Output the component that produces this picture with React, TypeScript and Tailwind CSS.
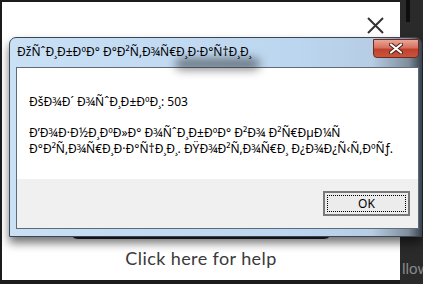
export default function App() {
  return (
    <div className="relative flex h-[284px] w-[423px] overflow-hidden bg-[#1c1c1c] pt-[2px] pl-[2px]">
      {/* page behind the dialog */}
      <div className="flex h-[278px] w-[398px] flex-col bg-white">
        <div className="flex justify-end pr-[15px] pt-[14px]">
          <svg width="19" height="19" viewBox="0 0 19 19">
            <path d="M2 2 L17 17 M17 2 L2 17" stroke="#333" strokeWidth="2" />
          </svg>
        </div>
        <div className="mx-[68px] mt-[115px] h-[89px] rounded-b-[8px] bg-[#262626]" />
        <div className="mt-[6px] text-center text-[18px] tracking-[0.4px] text-[#3a3a3a] [font-family:Lato,'Open_Sans',sans-serif]">
          Click here for help
        </div>
      </div>
      <div className="-mt-[2px] flex h-[284px] flex-1 flex-col overflow-hidden bg-[#2a2a2a]">
        <div className="ml-[6px] h-[22px] w-[4px] bg-[#0e0e0e]" />
        <div className="mt-[237px] whitespace-nowrap pl-[2px] text-[15px] leading-[18px] text-[#8a8a8a] [font-family:Lato,sans-serif]">
          llow
        </div>
      </div>

      {/* dialog window over the page */}
      <div className="absolute left-[9px] top-[37px] h-[200px] w-[413px] rounded-t-[7px] border border-[#3a4654] bg-[linear-gradient(90deg,#c9e0f5_0%,#bcd6ef_70%,#b6cde4_88%,#7f8d9b_97%,#3d4650_100%)] shadow-[0_6px_10px_rgba(0,0,0,0.55)] [font-family:'Noto_Sans','DejaVu_Sans',sans-serif]">
        <div className="relative flex h-[29px] items-start justify-between pl-[7px] pr-[2px]">
          <div className="absolute left-[165px] top-[20px] h-[12px] w-[85px] rounded-full bg-[#1a1a1a] opacity-50 blur-[5px]" />
          <div className="relative pt-[5px] text-[12px] text-black">
            ĐžÑˆĐ¸Đ±ĐºĐ° Đ°Đ²Ñ‚Đ¾Ñ€Đ¸Đ·Đ°Ñ†Đ¸Đ¸
          </div>
          <div className="relative mt-[1px] flex h-[19px] w-[46px] items-center justify-center rounded-b-[4px] border border-[#6e2a20] bg-[linear-gradient(180deg,#e9a698_0%,#d8705e_45%,#c0412c_55%,#c9553e_100%)]">
            <svg width="14" height="11" viewBox="0 0 14 11">
              <path d="M2 1.5 L12 9.5 M12 1.5 L2 9.5" stroke="#4a1e18" strokeWidth="4" strokeLinecap="round" />
              <path d="M2 1.5 L12 9.5 M12 1.5 L2 9.5" stroke="#ffffff" strokeWidth="2.2" strokeLinecap="round" />
            </svg>
          </div>
        </div>
        <div className="ml-[6px] mr-[2px] border border-[#5d6b78]">
          <div className="h-[111px] bg-white px-[12px] pt-[26px] text-[12px] leading-[16px] text-black">
            <p>ĐšĐ¾Đ´ Đ¾ÑˆĐ¸Đ±ĐºĐ¸: 503</p>
            <p className="mt-[15px]">
              Đ’Đ¾Đ·Đ½Đ¸ĐºĐ»Đ° Đ¾ÑˆĐ¸Đ±ĐºĐ° Đ²Đ¾ Đ²Ñ€ĐµĐ¼Ñ
              <br />
              Đ°Đ²Ñ‚Đ¾Ñ€Đ¸Đ·Đ°Ñ†Đ¸Đ¸. ĐŸĐ¾Đ²Ñ‚Đ¾Ñ€Đ¸ Đ¿Đ¾Đ¿Ñ‹Ñ‚ĐºÑƒ.
            </p>
          </div>
          <div className="flex h-[49px] items-start justify-end bg-[#f0f0f0] pr-[8px] pt-[12px]">
            <button className="h-[25px] w-[87px] border-2 border-[#7a7a7a] bg-[#ececec] p-[2px]">
              <div className="flex h-full w-full items-center justify-center border border-dotted border-black text-[12px] text-black">
                OK
              </div>
            </button>
          </div>
        </div>
      </div>
    </div>
  );
}
